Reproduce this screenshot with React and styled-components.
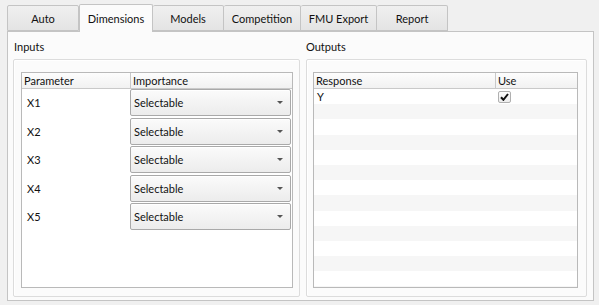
import React from 'react'
import styled, { createGlobalStyle } from "styled-components"

const Global = createGlobalStyle`
  html, body { margin: 0; padding: 0; background: #f0f0f0; }
  body { font-family: Lato, "Open Sans", sans-serif; font-size: 11px; color: #111; }
`;

const Window = styled.div`
  width: 599px;
  height: 305px;
  box-sizing: border-box;
  padding: 4px 5px 0 7px;
`;

const TabBar = styled.div`
  display: flex;
  align-items: flex-end;
  height: 27px;
  position: relative;
  z-index: 1;
`;

const Tab = styled.div`
  width: ${p => p.$w}px;
  height: ${p => (p.$active ? 28 : 26)}px;
  box-sizing: border-box;
  display: flex;
  align-items: center;
  justify-content: center;
  border: 1px solid #c4c4c4;
  border-bottom: ${p => (p.$active ? "none" : "1px solid #c4c4c4")};
  border-left: ${p => (p.$first || p.$active ? "1px solid #c4c4c4" : "none")};
  border-radius: 2px 2px 0 0;
  background: ${p => (p.$active ? "#fbfbfb" : "linear-gradient(#f0f0f0, #e4e4e4)")};
  margin-bottom: ${p => (p.$active ? -1 : 0)}px;
  padding-top: ${p => (p.$active ? 0 : 1)}px;
  color: #111;
`;

const Pane = styled.div`
  height: 270px;
  width: 587px;
  box-sizing: border-box;
  border: 1px solid #c4c4c4;
  background: #fbfbfb;
  padding: 9px 6px 3px 5px;
  display: grid;
  grid-template-columns: 287px 281px;
  column-gap: 6px;
`;

const Section = styled.div`
  display: flex;
  flex-direction: column;
  min-height: 0;
`;

const Label = styled.div`
  height: 18px;
  padding-left: ${p => p.$indent}px;
  line-height: 12px;
`;

const Frame = styled.div`
  flex: 1;
  min-height: 0;
  border: 1px solid #dcdcdc;
  box-shadow: inset 1px 1px 0 #fff;
  border-radius: 2px;
  padding: 12px ${p => p.$pr}px 8px ${p => p.$pl}px;
  display: flex;
`;

const Table = styled.div`
  flex: 1;
  border: 1px solid #b9b9b9;
  background: #fff;
  display: flex;
  flex-direction: column;
  overflow: hidden;
`;

const Header = styled.div`
  display: grid;
  grid-template-columns: ${p => p.$cols};
  height: 15px;
  flex: none;
  border-bottom: 1px solid #c9c9c9;
  background: linear-gradient(#fdfdfd, #f1f1f1);
`;

const HeadCell = styled.div`
  padding-left: 2px;
  line-height: 15px;
  border-left: ${p => (p.$divider ? "1px solid #c9c9c9" : "none")};
`;

const InputRow = styled.div`
  display: grid;
  grid-template-columns: 108px 161px;
  height: 28.5px;
  flex: none;
  align-items: start;
`;

const ParamName = styled.div`
  padding-left: 5px;
  line-height: 27px;
`;

const Combo = styled.div`
  height: 27px;
  box-sizing: border-box;
  border: 1px solid #a9a9a9;
  border-radius: 2px;
  background: linear-gradient(#fbfbfb, #ececec);
  box-shadow: inset 0 1px 0 #fff;
  display: flex;
  align-items: center;
  justify-content: space-between;
  padding: 0 7px 0 3px;
`;

const Arrow = styled.span`
  width: 0;
  height: 0;
  border-left: 3.5px solid transparent;
  border-right: 3.5px solid transparent;
  border-top: 3.5px solid #555;
`;

const OutputRow = styled.div`
  display: grid;
  grid-template-columns: 182px 83px;
  height: 15.2px;
  flex: none;
  align-items: center;
  background: ${p => (p.$odd ? "#f6f6f6" : "#fff")};
`;

const ResponseName = styled.div`
  padding-left: 3px;
`;

const CheckBox = styled.div`
  width: 13px;
  height: 12px;
  box-sizing: border-box;
  margin-left: 2px;
  border: 1px solid #b0b0b0;
  border-radius: 2px;
  background: linear-gradient(#fdfdfd, #ededed);
  display: flex;
  align-items: center;
  justify-content: center;
`;

const params = ["X1", "X2", "X3", "X4", "X5"];
const tabs = [
  { label: "Auto", w: 72 },
  { label: "Dimensions", w: 74, active: true },
  { label: "Models", w: 71 },
  { label: "Competition", w: 77 },
  { label: "FMU Export", w: 76 },
  { label: "Report", w: 71 },
];

export default function App() {
  return (
    <>
      <Global />
      <Window>
        <TabBar>
          {tabs.map((t, i) => (
            <Tab key={t.label} $w={t.w} $active={t.active} $first={i === 0}>{t.label}</Tab>
          ))}
        </TabBar>
        <Pane>
          <Section>
            <Label $indent={1}>Inputs</Label>
            <Frame $pl={7} $pr={6}>
              <Table>
                <Header $cols="108px 1fr">
                  <HeadCell>Parameter</HeadCell>
                  <HeadCell $divider>Importance</HeadCell>
                </Header>
                {params.map(p => (
                  <InputRow key={p}>
                    <ParamName>{p}</ParamName>
                    <Combo>
                      <span>Selectable</span>
                      <Arrow />
                    </Combo>
                  </InputRow>
                ))}
              </Table>
            </Frame>
          </Section>
          <Section>
            <Label $indent={0}>Outputs</Label>
            <Frame $pl={6} $pr={8}>
              <Table>
                <Header $cols="181px 1fr">
                  <HeadCell>Response</HeadCell>
                  <HeadCell $divider>Use</HeadCell>
                </Header>
                {Array.from({ length: 14 }).map((_, i) => (
                  <OutputRow key={i} $odd={i % 2 === 1}>
                    <ResponseName>{i === 0 ? "Y" : ""}</ResponseName>
                    {i === 0 ? (
                      <CheckBox>
                        <svg width="9" height="8" viewBox="0 0 9 8">
                          <path d="M1 4.2 L3.4 6.8 L8 1" fill="none" stroke="#111" strokeWidth="2" />
                        </svg>
                      </CheckBox>
                    ) : <span />}
                  </OutputRow>
                ))}
              </Table>
            </Frame>
          </Section>
        </Pane>
      </Window>
    </>
  );
}
